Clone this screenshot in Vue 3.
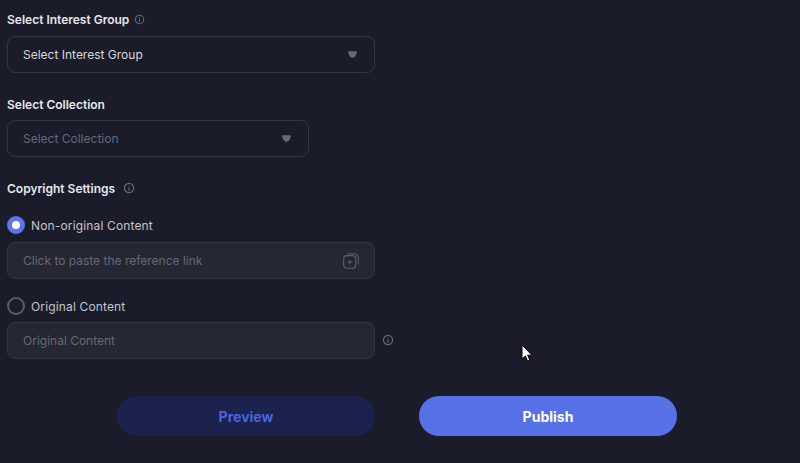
<script setup>
const selects = [
  { label: 'Select Interest Group', text: 'Select Interest Group', info: true, active: true },
  { label: 'Select Collection', text: 'Select Collection', info: false, active: false }
];
</script>

<template>
  <div class="page">
    <div v-for="item in selects" :key="item.label" class="field">
      <div class="label">
        {{ item.label }}
        <svg v-if="item.info" class="info small" viewBox="0 0 12 12"><circle cx="6" cy="6" r="4.6" /><path d="M6 5.4v3M6 3.4v.9" /></svg>
      </div>
      <div class="box" :class="{ narrow: !item.active }">
        <span :class="item.active ? 'value' : 'hint'">{{ item.text }}</span>
        <svg class="caret" viewBox="0 0 11 9"><path d="M2 2.2h7L7.6 5.6 5.5 7 3.4 5.6z" /></svg>
      </div>
    </div>

    <div class="label copyright">
      Copyright Settings
      <svg class="info" viewBox="0 0 12 12"><circle cx="6" cy="6" r="4.6" /><path d="M6 5.4v3M6 3.4v.9" /></svg>
    </div>

    <div class="radio-row first">
      <span class="radio on"></span>
      Non-original Content
    </div>
    <div class="box filled">
      <span class="hint">Click to paste the reference link</span>
      <svg class="paste" viewBox="0 0 16 16">
        <rect x="0.7" y="2.6" width="12" height="12.7" rx="3" />
        <path d="M4.5 0.8h7a3.7 3.7 0 0 1 3.8 3.7v7" />
        <path d="M6.7 6.7v4.6M4.4 9h4.6" />
      </svg>
    </div>

    <div class="radio-row second">
      <span class="radio"></span>
      Original Content
    </div>
    <div class="input-row">
      <div class="box filled last">
        <span class="hint">Original Content</span>
      </div>
      <svg class="info side" viewBox="0 0 12 12"><circle cx="6" cy="6" r="4.6" /><path d="M6 5.4v3M6 3.4v.9" /></svg>
    </div>

    <div class="actions">
      <button class="btn preview">Preview</button>
      <button class="btn publish">Publish</button>
    </div>

    <svg class="cursor" viewBox="0 0 12 19"><path d="M1 1v14l3.4-3 2.2 5 2.2-1-2.2-4.8H11z" /></svg>
  </div>
</template>

<style scoped>
.page {
  position: relative;
  width: 800px;
  height: 463px;
  box-sizing: border-box;
  padding: 11px 0 0 7px;
  overflow: hidden;
  background: #1a1c2a;
  font-family: Inter, "Liberation Sans", sans-serif;
  font-size: 12px;
}
.field {
  margin-bottom: 23px;
}
.field:first-child .box {
  margin-top: 9px;
}
.label {
  display: flex;
  align-items: center;
  gap: 5px;
  height: 16px;
  font-size: 12px;
  font-weight: 600;
  color: #e6e7ea;
}
.copyright {
  gap: 8px;
}
.info {
  width: 12px;
  height: 12px;
  fill: none;
  stroke: #666a76;
  stroke-width: 1.2;
}
.info.small {
  width: 11px;
  height: 11px;
}
.box {
  display: flex;
  align-items: center;
  justify-content: space-between;
  box-sizing: border-box;
  width: 368px;
  height: 37px;
  margin-top: 8px;
  padding: 0 15px;
  border: 1px solid #33353f;
  border-radius: 8px;
}
.narrow {
  width: 302px;
}
.filled {
  background: #252733;
}
.value {
  color: #d7d8dc;
}
.hint {
  color: #666975;
}
.caret {
  width: 11px;
  height: 9px;
  margin-right: 1px;
  fill: #666975;
  stroke: #666975;
  stroke-width: 2;
  stroke-linejoin: round;
}
.paste {
  width: 16px;
  height: 16px;
  fill: none;
  stroke: #5b5f6c;
  stroke-width: 1.1;
}
.radio-row {
  display: flex;
  align-items: center;
  gap: 6px;
  height: 18px;
  color: #c4c5ca;
  letter-spacing: 0.15px;
}
.first {
  margin-top: 20px;
}
.second {
  margin-top: 18px;
}
.radio {
  box-sizing: border-box;
  width: 18px;
  height: 18px;
  border: 2px solid #5a5c66;
  border-radius: 50%;
}
.radio.on {
  border: 5px solid #5d74f2;
  background: #fff;
}
.input-row {
  display: flex;
  align-items: center;
  gap: 7px;
  margin-top: 7px;
}
.last {
  margin-top: 0;
}
.side {
  margin-top: -2px;
}
.actions {
  display: flex;
  gap: 44px;
  margin: 37px 0 0 110px;
}
.btn {
  width: 258px;
  height: 40px;
  border: none;
  border-radius: 20px;
  font-family: inherit;
  font-size: 14px;
  font-weight: 700;
}
.preview {
  background: #1a224d;
  color: #4b63e0;
}
.publish {
  background: #5670e6;
  color: #fff;
}
.cursor {
  position: absolute;
  left: 521px;
  top: 344px;
  width: 12px;
  height: 19px;
  fill: #fff;
  stroke: #000;
  stroke-width: 1;
}
</style>
